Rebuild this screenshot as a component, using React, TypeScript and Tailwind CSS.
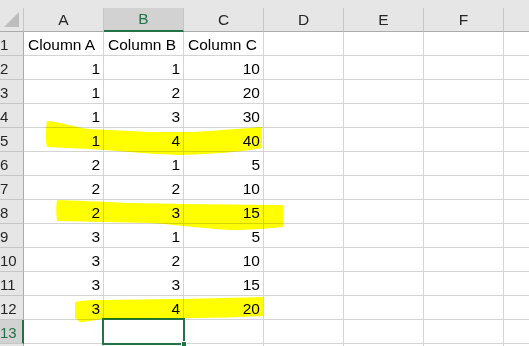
const columns = ["A", "B", "C", "D", "E", "F", ""];

const rows: (string | number)[][] = [
  ["Cloumn A", "Column B", "Column C"],
  [1, 1, 10],
  [1, 2, 20],
  [1, 3, 30],
  [1, 4, 40],
  [2, 1, 5],
  [2, 2, 10],
  [2, 3, 15],
  [3, 1, 5],
  [3, 2, 10],
  [3, 3, 15],
  [3, 4, 20],
  [],
  [],
];

function HeaderRow() {
  return (
    <div className="flex h-[32px] bg-[#e6e6e6]">
      {/* corner */}
      <div className="w-[24px] shrink-0 pt-[8px]">
        <div className="h-full border-r border-b border-[#c6c6c6] border-b-[#ababab] relative">
          <svg width="24" height="24" className="absolute left-0 top-0" viewBox="0 0 24 24">
            <polygon points="4,19 19,19 19,4" fill="#bdbdbd" />
          </svg>
        </div>
      </div>
      {columns.map((col, i) => {
        const active = col === "B";
        return (
          <div key={i} className="w-[80px] shrink-0 pt-[8px]">
            <div
              className={
                active
                  ? "h-full flex items-center justify-center border-r border-[#c6c6c6] bg-[#d2d2d2] border-b-2 border-b-[#217346] text-[#217346]"
                  : "h-full flex items-center justify-center border-r border-[#c6c6c6] border-b border-b-[#ababab] text-[#262626]"
              }
            >
              {col && <span className="text-[15.5px] leading-none">{col}</span>}
            </div>
          </div>
        );
      })}
    </div>
  );
}

function DataRow({ index, cells }: { index: number; cells: (string | number)[] }) {
  const active = index === 13;
  // row 14 is only a sliver at the bottom edge, its number is out of view
  const label = index <= 13 ? index : "";
  return (
    <div className="flex h-[24px]">
      <div
        className={
          active
            ? "w-[24px] shrink-0 bg-[#d2d2d2] border-r-2 border-r-[#217346] border-b border-b-[#c6c6c6] text-[#217346] flex items-center"
            : "w-[24px] shrink-0 bg-[#e6e6e6] border-r border-r-[#ababab] border-b border-b-[#c6c6c6] text-[#262626] flex items-center"
        }
      >
        <span className="text-[15px] leading-none pt-[2px] whitespace-nowrap">{label}</span>
      </div>
      {columns.map((col, i) => {
        const value = cells[i];
        const isNumber = typeof value === "number";
        return (
          <div
            key={i}
            className={
              isNumber
                ? "w-[80px] shrink-0 border-r border-b border-[#d4d4d4] flex items-center justify-end pr-[3px]"
                : "w-[80px] shrink-0 border-r border-b border-[#d4d4d4] flex items-center justify-start pl-[4px]"
            }
          >
            {value !== undefined && (
              <span className="text-[15.5px] leading-none pt-[3px] text-black whitespace-nowrap">{value}</span>
            )}
          </div>
        );
      })}
    </div>
  );
}

export default function App() {
  return (
    <div className="w-[529px] h-[346px] overflow-hidden relative bg-white font-['Liberation_Sans',Arial,sans-serif]">
      <div className="w-[584px]">
        <HeaderRow />
        {rows.map((cells, i) => (
          <DataRow key={i} index={i + 1} cells={cells} />
        ))}
      </div>

      {/* selected cell B13 */}
      <div className="absolute left-[102px] top-[318px] w-[83px] h-[27px] border-2 border-[#217346]">
        <div className="absolute -right-[4px] -bottom-[4px] w-[6px] h-[6px] bg-[#217346] border border-white" />
      </div>

      {/* marker highlights */}
      <svg
        className="absolute left-0 top-0 pointer-events-none mix-blend-multiply"
        width="529"
        height="346"
        viewBox="0 0 529 346"
      >
        <path
          d="M47,121 C62,122 74,127 88,129 L150,132 L190,132 C212,131 230,129 262,127 L262,148 C240,152 215,154 183,155 C160,155 120,151 90,149 L47,147 C45,138 46,128 47,121 Z"
          fill="#ffff00"
        />
        <path
          d="M57,200 C90,201 110,202 130,203 L185,204 L283,205 L283,227 C265,229 245,230 230,230 C200,228 170,224 150,223 L57,221 C56,214 56,206 57,200 Z"
          fill="#ffff00"
        />
        <path
          d="M75,302 C85,300 95,300 103,300 L180,299 L263,297 L263,316 C240,317 220,318 200,318 L103,319 C95,320 86,322 80,322 L75,318 Z"
          fill="#ffff00"
        />
      </svg>
    </div>
  );
}
